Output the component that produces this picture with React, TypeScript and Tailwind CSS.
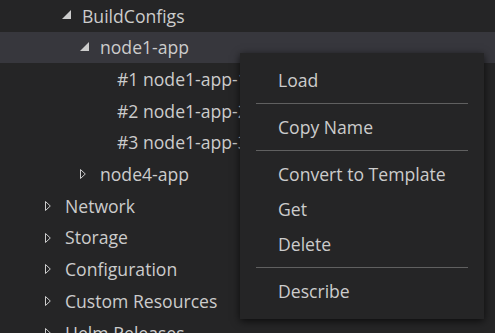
type Twistie = 'open' | 'closed' | 'none'

interface Row {
  label: string
  twistie: Twistie
  triX: number
  textX: number
  selected?: boolean
}

const rows: Row[] = [
  { label: 'BuildConfigs', twistie: 'open', triX: 62, textX: 82 },
  { label: 'node1-app', twistie: 'open', triX: 80, textX: 100, selected: true },
  { label: '#1 node1-app-1', twistie: 'none', triX: 117, textX: 117 },
  { label: '#2 node1-app-2', twistie: 'none', triX: 117, textX: 117 },
  { label: '#3 node1-app-3', twistie: 'none', triX: 117, textX: 117 },
  { label: 'node4-app', twistie: 'closed', triX: 80, textX: 100 },
  { label: 'Network', twistie: 'closed', triX: 45, textX: 65 },
  { label: 'Storage', twistie: 'closed', triX: 45, textX: 65 },
  { label: 'Configuration', twistie: 'closed', triX: 45, textX: 65 },
  { label: 'Custom Resources', twistie: 'closed', triX: 45, textX: 65 },
  { label: 'Helm Releases', twistie: 'closed', triX: 45, textX: 65 },
]

type MenuEntry = { label: string } | 'sep'

const menu: MenuEntry[] = [
  { label: 'Load' },
  'sep',
  { label: 'Copy Name' },
  'sep',
  { label: 'Convert to Template' },
  { label: 'Get' },
  { label: 'Delete' },
  'sep',
  { label: 'Describe' },
]

function TwistieIcon({ kind }: { kind: Twistie }) {
  if (kind === 'open') {
    return (
      <svg width="9" height="9" viewBox="0 0 9 9" className="mb-[3px] shrink-0">
        <polygon points="9,0 9,9 0,9" fill="#cccccc" />
      </svg>
    )
  }
  if (kind === 'closed') {
    return (
      <svg width="6" height="10" viewBox="0 0 6 10" className="shrink-0">
        <polygon points="0.5,0.5 5.3,5 0.5,9.5" fill="none" stroke="#cccccc" strokeWidth="1" />
      </svg>
    )
  }
  return null
}

export default function App() {
  return (
    <div
      className="relative w-[495px] h-[333px] overflow-hidden bg-[#252526] text-[#cccccc] text-[17.6px]"
      style={{ fontFamily: '"Open Sans", "Noto Sans", sans-serif' }}
    >
      <div className="flex flex-col">
        {rows.map(row => (
          <div
            key={row.label}
            className={`flex items-center h-[31.7px] whitespace-nowrap ${row.selected ? 'bg-[#37373d]' : ''}`}
            style={{ paddingLeft: row.triX }}
          >
            <div className="flex items-center shrink-0" style={{ width: row.textX - row.triX }}>
              <TwistieIcon kind={row.twistie} />
            </div>
            <span>{row.label}</span>
          </div>
        ))}
      </div>

      {/* context menu */}
      <div className="absolute left-[240px] top-[53px] w-[244px] py-[10px] bg-[#252526] shadow-[0_2px_8px_rgba(0,0,0,0.7)]">
        {menu.map((entry, i) =>
          entry === 'sep' ? (
            <div key={i} className="mx-[16px] h-px bg-[#606060] mt-[5px] mb-[6px]" />
          ) : (
            <div key={i} className="flex items-center h-[35px] pl-[38px] whitespace-nowrap">
              {entry.label}
            </div>
          )
        )}
      </div>
    </div>
  )
}
